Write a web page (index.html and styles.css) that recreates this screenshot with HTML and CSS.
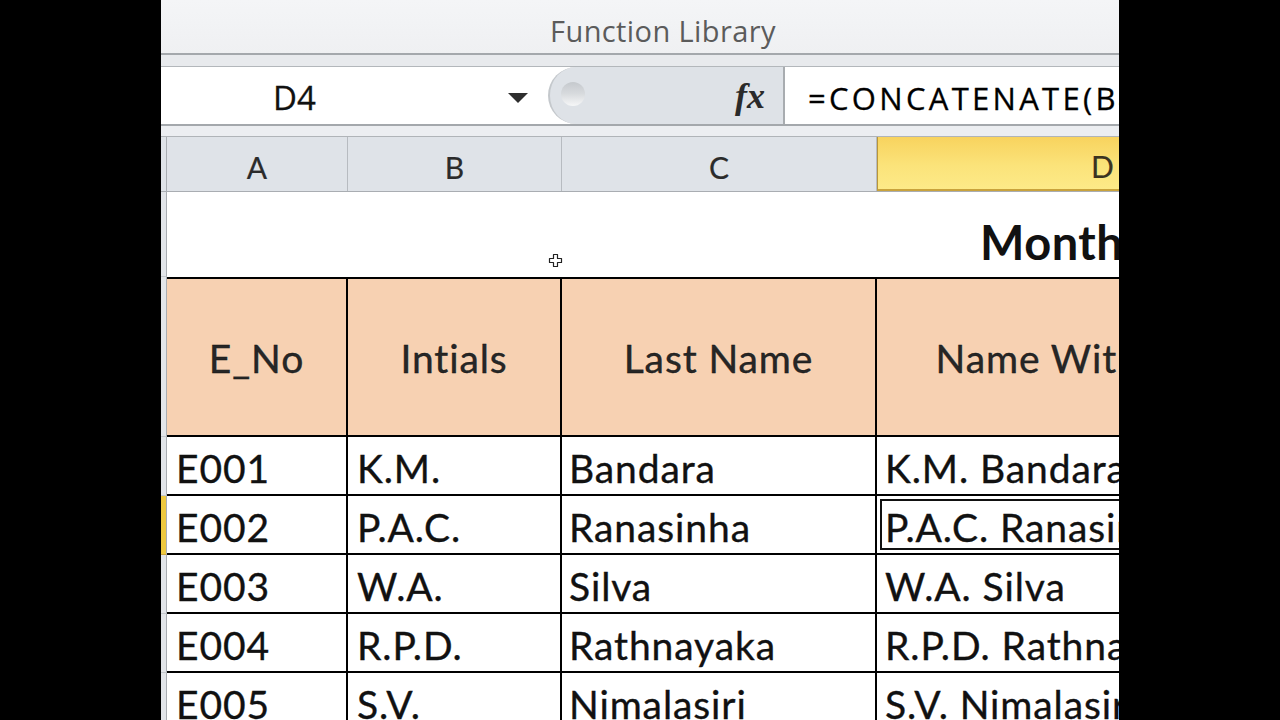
FILE: index.html
```html
<!DOCTYPE html>
<html lang="en">
<head>
<meta charset="utf-8">
<title>Excel - CONCATENATE</title>
<link rel="stylesheet" href="styles.css">
</head>
<body>
<div class="screen">
  <div class="ribbon"><span class="group-label">Function Library</span></div>
  <div class="ribbon-gap"></div>
  <div class="fbar">
    <div class="namebox"><span class="name">D4</span><span class="dd"></span></div>
    <div class="splitter"><span class="dot"></span><span class="fx">fx</span></div>
    <div class="finput">=CONCATENATE(B4," ",C4)</div>
  </div>
  <div class="fbar-gap"></div>
  <div class="sheet">
    <div class="colheads">
      <div class="corner"></div>
      <div class="ch col-a">A</div>
      <div class="ch col-b">B</div>
      <div class="ch col-c">C</div>
      <div class="ch col-d active">D</div>
    </div>
    <div class="row title-row">
      <div class="rh"></div>
      <div class="title-cell">Monthly Salary</div>
    </div>
    <div class="row head-row">
      <div class="rh"></div>
      <div class="cell col-a">E_No</div>
      <div class="cell col-b">Intials</div>
      <div class="cell col-c">Last Name</div>
      <div class="cell col-d">Name With Initials</div>
    </div>
    <div class="row data-row">
      <div class="rh"></div>
      <div class="cell col-a">E001</div>
      <div class="cell col-b">K.M.</div>
      <div class="cell col-c">Bandara</div>
      <div class="cell col-d">K.M. Bandara</div>
    </div>
    <div class="row data-row">
      <div class="rh rh-active"></div>
      <div class="cell col-a">E002</div>
      <div class="cell col-b">P.A.C.</div>
      <div class="cell col-c">Ranasinha</div>
      <div class="cell col-d selected">P.A.C. Ranasinha</div>
    </div>
    <div class="row data-row">
      <div class="rh"></div>
      <div class="cell col-a">E003</div>
      <div class="cell col-b">W.A.</div>
      <div class="cell col-c">Silva</div>
      <div class="cell col-d">W.A. Silva</div>
    </div>
    <div class="row data-row">
      <div class="rh"></div>
      <div class="cell col-a">E004</div>
      <div class="cell col-b">R.P.D.</div>
      <div class="cell col-c">Rathnayaka</div>
      <div class="cell col-d">R.P.D. Rathnayaka</div>
    </div>
    <div class="row data-row">
      <div class="rh"></div>
      <div class="cell col-a">E005</div>
      <div class="cell col-b">S.V.</div>
      <div class="cell col-c">Nimalasiri</div>
      <div class="cell col-d">S.V. Nimalasiri</div>
    </div>
  </div>
  <svg class="cursor" width="15" height="15" viewBox="0 0 15 15" aria-hidden="true">
    <path d="M5.5 1.5h4v4h4v4h-4v4h-4v-4h-4v-4h4z" fill="#fff" stroke="#222" stroke-width="1.2" stroke-linejoin="round"/>
  </svg>
</div>
</body>
</html>
```

FILE: styles.css
```css
html, body {
  margin: 0;
  padding: 0;
  background: #000;
  height: 100%;
}

body {
  display: flex;
  justify-content: center;
  overflow: hidden;
}

.screen {
  position: relative;
  width: 958px;
  height: 720px;
  overflow: hidden;
  background: #fff;
  display: flex;
  flex-direction: column;
}

/* Ribbon group label */
.ribbon {
  box-sizing: border-box;
  height: 55px;
  flex-shrink: 0;
  background: linear-gradient(#f4f5f7, #eff0f2);
  border-bottom: 2px solid #a4a8ac;
  display: flex;
  justify-content: center;
  padding-left: 46px;
  padding-top: 11px;
}

.group-label {
  font-family: "Open Sans", "Noto Sans", sans-serif;
  font-size: 29px;
  line-height: normal;
  color: #5b5b5b;
  letter-spacing: 0.4px;
}

.ribbon-gap {
  box-sizing: border-box;
  height: 12px;
  flex-shrink: 0;
  background: #e8eaed;
  border-bottom: 1px solid #b3b7bb;
}

/* Formula bar */
.fbar {
  box-sizing: border-box;
  height: 59px;
  flex-shrink: 0;
  display: flex;
  background: #fff;
  border-bottom: 2px solid #a4a8ac;
}

.namebox {
  width: 387px;
  flex-shrink: 0;
  display: flex;
  align-items: center;
  background: #fff;
}

.name {
  padding-left: 112px;
  padding-top: 4px;
  font-family: "Open Sans", "Noto Sans", sans-serif;
  font-size: 33px;
  color: #111;
  -webkit-text-stroke: 0.3px #111;
}

.dd {
  margin-left: auto;
  margin-right: 20px;
  margin-top: 5px;
  width: 0;
  height: 0;
  border-left: 10px solid transparent;
  border-right: 10px solid transparent;
  border-top: 10px solid #2e2e2e;
}

.splitter {
  box-sizing: border-box;
  width: 237px;
  flex-shrink: 0;
  display: flex;
  align-items: center;
  background: #dee2e7;
  border-radius: 30px 0 0 30px;
  border-left: 2px solid #c4c8cc;
  border-right: 2px solid #a8acb0;
  padding-right: 18px;
}

.dot {
  width: 24px;
  height: 24px;
  border-radius: 50%;
  margin-left: 11px;
  margin-top: -4px;
  background: linear-gradient(#c5c9cd, #d8dbde 50%, #f6f7f8);
}

.fx {
  margin-left: auto;
  font-family: "Liberation Serif", serif;
  font-style: italic;
  font-weight: bold;
  font-size: 36px;
  color: #2a2a2a;
  line-height: 1;
}

.finput {
  flex: 1;
  display: flex;
  align-items: center;
  padding-left: 23px;
  padding-top: 4px;
  font-family: "Open Sans", "Noto Sans", sans-serif;
  font-size: 31px;
  letter-spacing: 3.3px;
  color: #000;
  -webkit-text-stroke: 0.3px #000;
  white-space: nowrap;
  overflow: hidden;
}

.fbar-gap {
  box-sizing: border-box;
  height: 11px;
  flex-shrink: 0;
  background: #eceef1;
  border-bottom: 1px solid #b0b4b8;
}

/* Sheet */
.sheet {
  flex: 1;
  display: flex;
  flex-direction: column;
}

.colheads {
  box-sizing: border-box;
  height: 55px;
  flex-shrink: 0;
  display: flex;
  background: #dfe3e8;
  border-bottom: 1px solid #a9adb2;
}

.corner {
  box-sizing: border-box;
  width: 6px;
  flex-shrink: 0;
  border-right: 1px solid #a9adb2;
}

.ch {
  box-sizing: border-box;
  flex-shrink: 0;
  display: flex;
  align-items: center;
  justify-content: center;
  padding-top: 5px;
  border-right: 1px solid #b7bbc0;
  font-family: "Lato", "Open Sans", sans-serif;
  font-size: 30px;
  color: #2b2b2b;
  -webkit-text-stroke: 0.2px #2b2b2b;
}

.ch.active {
  background: linear-gradient(#f8d35e, #fbe37a 55%, #fdea88);
  border-left: 1px solid #b8963a;
  border-bottom: 2px solid #c9a33c;
  border-right: none;
  color: #3a3320;
}

.col-a { width: 181px; }
.col-b { width: 214px; }
.col-c { width: 315px; }
.col-d { width: 450px; }

.row {
  display: flex;
  flex-shrink: 0;
}

.rh {
  box-sizing: border-box;
  width: 6px;
  flex-shrink: 0;
  background: #e2e5e9;
  border-right: 1px solid #a9adb2;
  border-bottom: 1px solid #c3c7cc;
}

.rh-active {
  background: #efc93f;
  border-bottom-color: #c9a33c;
}

.title-row {
  height: 85px;
}

.title-cell {
  flex: 1;
  display: flex;
  align-items: flex-end;
  padding-left: 813px;
  padding-bottom: 11px;
  font-family: "Lato", "Open Sans", sans-serif;
  font-weight: 700;
  font-size: 47px;
  line-height: 47px;
  letter-spacing: 0.5px;
  color: #111;
  white-space: nowrap;
}

.cell {
  box-sizing: border-box;
  flex-shrink: 0;
  display: flex;
  font-family: "Lato", "Open Sans", sans-serif;
  font-size: 39px;
  line-height: 39px;
  letter-spacing: 0.9px;
  color: #111;
  -webkit-text-stroke: 0.35px #111;
  white-space: nowrap;
  border-right: 2px solid #000;
  border-bottom: 2px solid #000;
}

.cell.col-d {
  border-right: none;
}

.head-row {
  height: 160px;
}

.head-row .cell {
  background: #f7d1b2;
  border-top: 2px solid #000;
  align-items: center;
  justify-content: center;
  padding-top: 2px;
  color: #262626;
}

.data-row {
  height: 59px;
}

.data-row .cell {
  align-items: flex-end;
  padding-bottom: 6px;
  padding-left: 9px;
}

.data-row .cell.col-b { padding-left: 9px; }
.data-row .cell.col-c { padding-left: 7px; }
.data-row .cell.col-d { padding-left: 8px; }

.cell.selected {
  box-shadow: inset 0 0 0 3px #fff, inset 0 0 0 5px #111;
}

.cursor {
  position: absolute;
  left: 387px;
  top: 253px;
}
```
